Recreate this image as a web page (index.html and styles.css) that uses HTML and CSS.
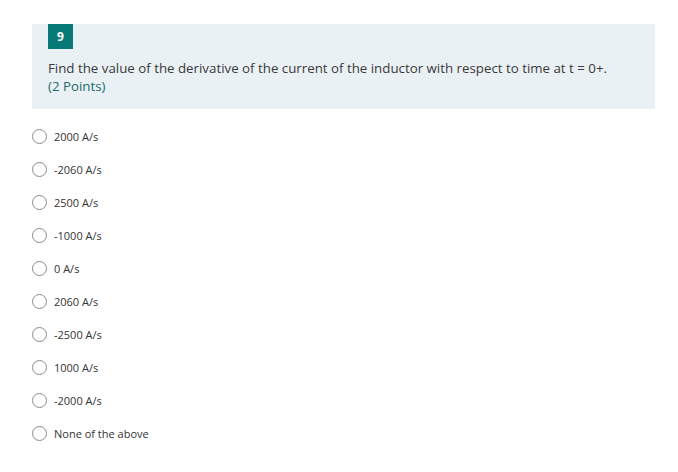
FILE: index.html
```html
<!DOCTYPE html>
<html>
<head>
<meta charset="utf-8">
<link rel="stylesheet" href="styles.css">
</head>
<body>
<div class="page">
  <div class="question">
    <div class="badge">9</div>
    <div class="qtext">Find the value of the derivative of the current of the inductor with respect to time at t = 0+.</div>
    <div class="points">(2 Points)</div>
  </div>
  <ul class="options">
    <li class="opt"><span class="radio"></span><span class="label">2000 A/s</span></li>
    <li class="opt"><span class="radio"></span><span class="label">-2060 A/s</span></li>
    <li class="opt"><span class="radio"></span><span class="label">2500 A/s</span></li>
    <li class="opt"><span class="radio"></span><span class="label">-1000 A/s</span></li>
    <li class="opt"><span class="radio"></span><span class="label">0 A/s</span></li>
    <li class="opt"><span class="radio"></span><span class="label">2060 A/s</span></li>
    <li class="opt"><span class="radio"></span><span class="label">-2500 A/s</span></li>
    <li class="opt"><span class="radio"></span><span class="label">1000 A/s</span></li>
    <li class="opt"><span class="radio"></span><span class="label">-2000 A/s</span></li>
    <li class="opt"><span class="radio"></span><span class="label">None of the above</span></li>
  </ul>
</div>
</body>
</html>
```
FILE: styles.css
```css
html, body {
  margin: 0;
  padding: 0;
  background: #ffffff;
}
body {
  font-family: "Open Sans", "Noto Sans", sans-serif;
  color: #333333;
}
.page {
  padding: 24px 23px 0 32px;
}
.question {
  background: #eaf1f4;
  height: 85px;
  padding: 0 16px;
  box-sizing: border-box;
}
.badge {
  width: 25px;
  height: 25px;
  background: #077a78;
  color: #ffffff;
  font-size: 12px;
  font-weight: 700;
  display: flex;
  align-items: center;
  justify-content: center;
}
.qtext {
  margin-top: 10px;
  font-size: 13.3px;
  line-height: 18px;
  color: #3a3a3a;
}
.points {
  font-size: 13.3px;
  line-height: 18px;
  color: #1c6a6a;
}
.options {
  list-style: none;
  margin: 0;
  padding: 11px 0 0 0;
}
.opt {
  display: flex;
  align-items: center;
  height: 33px;
}
.radio {
  width: 13px;
  height: 13px;
  border: 1px solid #8a8a8a;
  border-radius: 50%;
  box-sizing: content-box;
  flex: none;
}
.label {
  margin-left: 7px;
  font-size: 11px;
  color: #333333;
}
```
